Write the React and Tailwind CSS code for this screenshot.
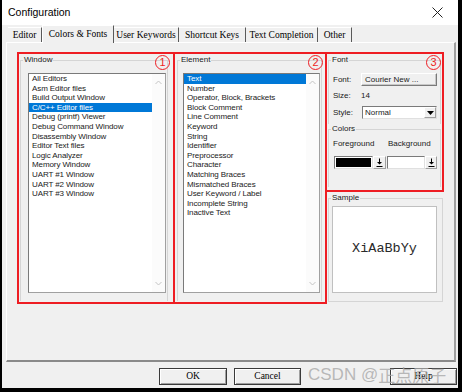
import React from 'react'

const sans = { fontFamily: '"Liberation Sans", Arial, sans-serif' }
const serif = { fontFamily: '"Liberation Serif", "Times New Roman", serif' }

const windows = [
    'All Editors',
    'Asm Editor files',
    'Build Output Window',
    'C/C++ Editor files',
    'Debug (printf) Viewer',
    'Debug Command Window',
    'Disassembly Window',
    'Editor Text files',
    'Logic Analyzer',
    'Memory Window',
    'UART #1 Window',
    'UART #2 Window',
    'UART #3 Window',
]

const elements = [
    'Text',
    'Number',
    'Operator, Block, Brackets',
    'Block Comment',
    'Line Comment',
    'Keyword',
    'String',
    'Identifier',
    'Preprocessor',
    'Character',
    'Matching Braces',
    'Mismatched Braces',
    'User Keyword / Label',
    'Incomplete String',
    'Inactive Text',
]

const tabs = [
    { label: 'Editor', w: 'w-[34px]' },
    { label: 'Colors & Fonts', w: 'w-[72px]', active: true },
    { label: 'User Keywords', w: 'w-[65px]' },
    { label: 'Shortcut Keys', w: 'w-[67px]' },
    { label: 'Text Completion', w: 'w-[72px]' },
    { label: 'Other', w: 'w-[34px]' },
]

function Chevron({ up }) {
    return (
        <svg width="7" height="5" viewBox="0 0 7 5">
            <path
                d={up ? 'M0.5 4 L3.5 1 L6.5 4' : 'M0.5 1 L3.5 4 L6.5 1'}
                fill="none"
                stroke="#c4c4c4"
                strokeWidth="1"
            />
        </svg>
    )
}

function ListBox({ items, selected, width }) {
    return (
        <div className={`${width} h-[220px] flex border border-[#a0a0a0] border-t-[#7a7a7a] border-l-[#7a7a7a] bg-white`}>
            <div className="flex-1 flex flex-col">
                {items.map((item, i) => (
                    <div
                        key={item}
                        className={`h-[9.6px] leading-[9.6px] pl-[3px] text-[8px] tracking-[-0.1px] whitespace-nowrap ${i === selected ? 'bg-[#0078d7] text-white' : 'text-[#1a1a1a]'}`}
                        style={sans}
                    >
                        {item}
                    </div>
                ))}
            </div>
            <div className="w-[13px] flex flex-col items-center justify-between py-[6px] bg-[#fbfbfb]">
                <Chevron up />
                <Chevron />
            </div>
        </div>
    )
}

function Legend({ children }) {
    return (
        <legend className="ml-[2px] px-[1px] text-[8px] leading-[10px] text-[#1a1a1a]" style={sans}>
            {children}
        </legend>
    )
}

function Badge({ n, pos }) {
    return (
        <div
            className={`absolute ${pos} w-[15px] h-[15px] rounded-full border-[1.5px] border-[#ee1d23] flex items-center justify-center text-[11px] leading-none text-[#ee1d23]`}
            style={sans}
        >
            {n}
        </div>
    )
}

function DownBtn({ w }) {
    return (
        <div className={`${w} h-[13px] flex items-center justify-center border border-[#a0a0a0] border-t-white border-l-white bg-[#f0f0f0]`}>
            <svg width="7" height="9" viewBox="0 0 7 9">
                <path d="M3.5 0.5 V5" stroke="#000" strokeWidth="1" />
                <path d="M1 4 L3.5 6.5 L6 4 Z" fill="#000" />
                <path d="M0.5 8.5 H6.5" stroke="#000" strokeWidth="1" />
            </svg>
        </div>
    )
}

function Button({ children, w }) {
    return (
        <div
            className={`${w} h-[17px] flex items-center justify-center border border-[#3a3a3a] bg-[#f0f0f0] shadow-[inset_1px_1px_0_#ffffff,inset_-1px_-1px_0_#a0a0a0] text-[9.5px] text-black`}
            style={serif}
        >
            {children}
        </div>
    )
}

export default function App() {
    return (
        <div className="w-[462px] h-[392px] bg-black overflow-hidden">
            <div className="ml-[2px] w-[456px] h-[388px] bg-[#f0f0f0] flex flex-col">
                {/* Title bar */}
                <div className="h-[25px] bg-white flex items-center pl-[6px] pr-[15px]">
                    <span className="text-[10.5px] text-black" style={sans}>Configuration</span>
                    <svg className="ml-auto" width="11" height="11" viewBox="0 0 11 11">
                        <path d="M0.5 0.5 L10.5 10.5 M10.5 0.5 L0.5 10.5" stroke="#222" strokeWidth="1" />
                    </svg>
                </div>

                {/* Tabs */}
                <div className="h-[17px] flex items-end pl-[6px]">
                    {tabs.map((t) =>
                        t.active ? (
                            <div
                                key={t.label}
                                className={`${t.w} h-[18px] -mb-px relative flex items-center justify-center border-l border-t border-white border-r border-r-[#5a5a5a] bg-[#f0f0f0] text-[9.5px] text-black whitespace-nowrap`}
                                style={serif}
                            >
                                {t.label}
                            </div>
                        ) : (
                            <div
                                key={t.label}
                                className={`${t.w} h-[15px] flex items-center justify-center border-t border-white border-r border-r-[#5a5a5a] text-[9.5px] text-black whitespace-nowrap`}
                                style={serif}
                            >
                                {t.label}
                            </div>
                        )
                    )}
                </div>

                {/* Tab panel */}
                <div className="ml-[4px] w-[450px] h-[320px] border-l border-t border-white border-r-2 border-b-2 border-r-[#a0a0a0] border-b-[#8a8a8a] pt-[9px] pl-[10px]">
                    <div className="flex items-start">
                        {/* Window */}
                        <div className="relative w-[158px] h-[252px] border-2 border-[#ee1d23]">
                            <Badge n="1" pos="top-[1px] right-[3px]" />
                            <fieldset className="mt-[1px] ml-[1px] w-[148px] h-[246px] border border-[#d5d5d5] border-b-0">
                                <Legend>Window</Legend>
                                <div className="mt-[8px] ml-[7px]">
                                    <ListBox items={windows} selected={3} width="w-[138px]" />
                                </div>
                            </fieldset>
                        </div>

                        {/* Element */}
                        <div className="relative -ml-[2px] w-[154px] h-[252px] border-2 border-[#ee1d23]">
                            <Badge n="2" pos="top-[1px] right-[2px]" />
                            <fieldset className="mt-[1px] ml-[2px] w-[145px] h-[246px] border border-[#d5d5d5] border-b-0">
                                <Legend>Element</Legend>
                                <div className="mt-[8px] ml-[5px]">
                                    <ListBox items={elements} selected={0} width="w-[137px]" />
                                </div>
                            </fieldset>
                        </div>

                        {/* Font / Colors / Sample */}
                        <div className="-ml-[2px] w-[119px] flex flex-col">
                            <div className="relative h-[140px] border-2 border-[#ee1d23]">
                                <Badge n="3" pos="top-[1px] right-[1px]" />
                                <fieldset className="mt-[1px] ml-[1px] mr-[1px] border border-[#d5d5d5] border-b-0 pb-[5px] text-[8px] text-[#1a1a1a]" style={sans}>
                                    <Legend>Font</Legend>
                                    <div className="mt-[8px] pl-[4px] flex items-center h-[13px]">
                                        <span className="w-[28px]">Font:</span>
                                        <div className="w-[76px] h-[13px] flex items-center pl-[3px] border border-[#7a7a7a] border-t-white border-l-white shadow-[inset_-1px_-1px_0_#c8c8c8] bg-[#f0f0f0]">
                                            Courier New ...
                                        </div>
                                    </div>
                                    <div className="mt-[5px] pl-[4px] flex items-center h-[10px]">
                                        <span className="w-[28px]">Size:</span>
                                        <span>14</span>
                                    </div>
                                    <div className="mt-[5px] pl-[4px] flex items-center h-[13px]">
                                        <span className="w-[29px]">Style:</span>
                                        <div className="w-[75px] h-[13px] flex items-center border border-[#7a7a7a] border-b-[#e0e0e0] border-r-[#e0e0e0] bg-white">
                                            <span className="flex-1 pl-[2px]">Normal</span>
                                            <div className="w-[12px] h-[11px] flex items-center justify-center border border-[#a0a0a0] border-t-white border-l-white bg-[#f0f0f0]">
                                                <svg width="7" height="4" viewBox="0 0 7 4">
                                                    <path d="M0 0 H7 L3.5 4 Z" fill="#000" />
                                                </svg>
                                            </div>
                                        </div>
                                    </div>
                                </fieldset>
                                <fieldset className="ml-[1px] mr-[1px] h-[63px] border border-[#d5d5d5] border-b-0 text-[8px] text-[#1a1a1a]" style={sans}>
                                    <Legend>Colors</Legend>
                                    <div className="mt-[5px] pl-[4px] flex items-center h-[10px]">
                                        <span className="w-[55px]">Foreground</span>
                                        <span>Background</span>
                                    </div>
                                    <div className="mt-[7px] pl-[5px] flex items-center">
                                        <div className="w-[39px] h-[13px] border border-[#7a7a7a] border-b-[#e0e0e0] border-r-[#e0e0e0] p-[1px] bg-white">
                                            <div className="w-full h-full bg-black" />
                                        </div>
                                        <DownBtn w="w-[13px]" />
                                        <div className="ml-[1px] w-[38px] h-[13px] border border-[#7a7a7a] border-b-[#e0e0e0] border-r-[#e0e0e0] bg-white" />
                                        <DownBtn w="w-[12px]" />
                                    </div>
                                </fieldset>
                            </div>
                            <fieldset className="mt-[1px] ml-[3px] w-[115px] h-[109px] border border-[#d5d5d5]">
                                <Legend>Sample</Legend>
                                <div className="mt-[3px] ml-[3px] w-[105px] h-[87px] border border-[#c0c0c0] bg-white flex items-center justify-center">
                                    <span
                                        className="text-[13.5px] text-[#2a2a2a]"
                                        style={{ fontFamily: '"Liberation Mono", "Courier New", monospace' }}
                                    >
                                        XiAaBbYy
                                    </span>
                                </div>
                            </fieldset>
                        </div>
                    </div>
                </div>

                {/* Buttons */}
                <div className="relative flex-1 flex items-start pt-[6px] pl-[157px] gap-[7px] pr-[1px]">
                    <Button w="w-[68px]">OK</Button>
                    <Button w="w-[67px]">Cancel</Button>
                    <div className="ml-auto">
                        <Button w="w-[67px]">Help</Button>
                    </div>
                    {/* CSDN watermark over the bottom bar */}
                    <div className="absolute left-[306px] top-[2px] flex items-center text-[17px] leading-[22px] text-[#a8a8a8]/80 whitespace-nowrap">
                        <span style={sans}>CSDN @</span>
                        <span style={{ fontFamily: '"Noto Sans CJK SC", sans-serif' }}>正点原子</span>
                    </div>
                </div>
            </div>
        </div>
    )
}
